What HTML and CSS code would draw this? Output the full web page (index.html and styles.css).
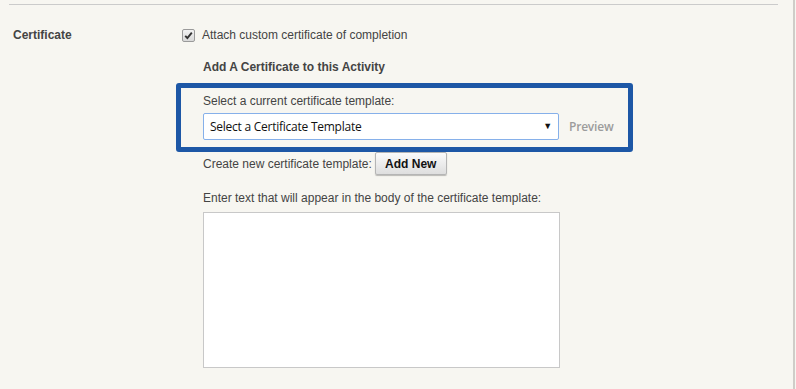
FILE: index.html
```html
<!DOCTYPE html>
<html>
<head>
<meta charset="utf-8">
<link rel="stylesheet" href="styles.css">
</head>
<body>
<div class="page">
  <div class="divider"></div>
  <div class="row">
    <div class="label">Certificate</div>
    <div class="content">
      <label class="check-line">
        <span class="checkbox"><svg viewBox="0 0 11 11" width="11" height="11"><path d="M2.2 5.8 L4.4 8 L8.8 2.6" fill="none" stroke="#333" stroke-width="1.9"/></svg></span>
        <span>Attach custom certificate of completion</span>
      </label>
      <div class="section-title">Add A Certificate to this Activity</div>
      <div class="highlight">
        <div class="field-label">Select a current certificate template:</div>
        <div class="select-line">
          <div class="select">
            <span>Select a Certificate Template</span>
            <span class="arrow">&#9660;</span>
          </div>
          <span class="preview">Preview</span>
        </div>
      </div>
      <div class="create-line">
        <span>Create new certificate template:</span>
        <button class="btn">Add New</button>
      </div>
      <div class="body-label">Enter text that will appear in the body of the certificate template:</div>
      <div class="textarea"></div>
    </div>
  </div>
</div>
</body>
</html>
```
FILE: styles.css
```css
html, body {
  margin: 0;
  padding: 0;
  background: #f7f6f1;
}
body {
  font-family: "Liberation Sans", Arial, sans-serif;
  font-size: 12px;
  color: #444;
}
.page {
  width: 793px;
  height: 389px;
  border-right: 2px solid #cfcdc8;
  box-sizing: content-box;
  overflow: hidden;
}
.divider {
  margin: 4px 0 0 9px;
  width: 769px;
  height: 1px;
  background: #cbcbcb;
}
.row {
  display: flex;
  padding-top: 22px;
}
.label {
  width: 163px;
  padding-left: 13px;
  font-weight: bold;
  color: #444;
  line-height: 16px;
}
.content {
  display: flex;
  flex-direction: column;
  align-items: flex-start;
}
.check-line {
  display: flex;
  align-items: center;
  gap: 7px;
  padding-left: 6px;
  line-height: 16px;
  color: #444;
}
.checkbox {
  width: 11px;
  height: 11px;
  border: 1px solid #9a9a9a;
  border-radius: 2px;
  background: linear-gradient(#f2f2f2, #d9d9d9);
  display: flex;
  align-items: center;
  justify-content: center;
}
.section-title {
  margin-top: 16px;
  padding-left: 27px;
  font-weight: bold;
  line-height: 16px;
  color: #444;
}
.highlight {
  margin-top: 8px;
  width: 425px;
  height: 54px;
  border: 5px solid #1d57a6;
  border-radius: 3px;
  padding: 5px 0 0 22px;
  box-sizing: content-box;
}
.field-label {
  line-height: 16px;
}
.select-line {
  display: flex;
  align-items: center;
  margin-top: 4px;
  gap: 10px;
}
.select {
  width: 356px;
  height: 27px;
  box-sizing: border-box;
  border: 1px solid #86b0ea;
  border-radius: 2px;
  background: #fff;
  display: flex;
  align-items: center;
  justify-content: space-between;
  padding: 0 6px 0 6px;
  font-family: "Open Sans", "Noto Sans", sans-serif;
  font-size: 12px;
  letter-spacing: -0.25px;
  color: #111;
}
.arrow {
  font-size: 9px;
  color: #111;
  margin-top: -2px;
}
.preview {
  font-weight: 600;
  color: #9c9c9c;
  font-family: "Open Sans", "Noto Sans", sans-serif;
  font-size: 12px;
  letter-spacing: -0.2px;
}
.create-line {
  display: flex;
  align-items: center;
  gap: 3px;
  padding-left: 27px;
}
.btn {
  height: 23px;
  width: 72px;
  border: 1px solid #b5b5b5;
  border-radius: 2px;
  background: linear-gradient(#fbfbfb, #dedede);
  box-shadow: 0 1px 1px rgba(0,0,0,0.25);
  font-family: "Liberation Sans", Arial, sans-serif;
  font-weight: bold;
  font-size: 12px;
  color: #111;
  padding: 0;
}
.body-label {
  margin-top: 15px;
  padding-left: 27px;
  line-height: 16px;
}
.textarea {
  margin-top: 6px;
  margin-left: 27px;
  width: 357px;
  height: 156px;
  box-sizing: border-box;
  border: 1px solid #c8c8c8;
  background: #fff;
}
```
